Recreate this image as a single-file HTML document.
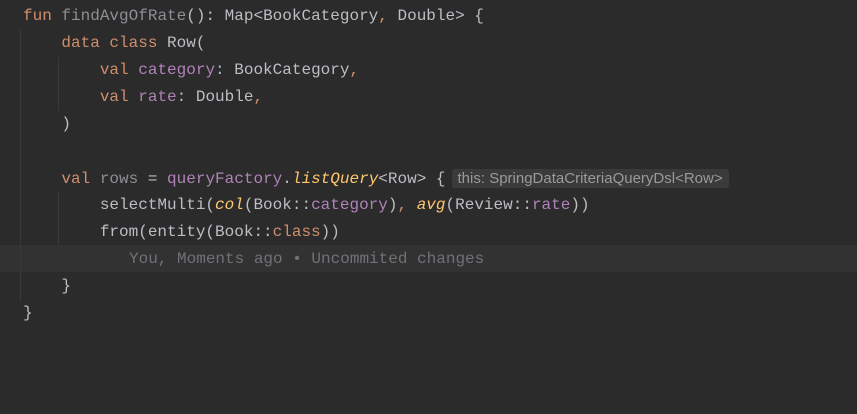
<!DOCTYPE html>
<html><head><style>
body{margin:0;width:857px;height:414px;background:#2b2b2b;overflow:hidden;position:relative;font-family:"Liberation Mono",monospace;font-size:16px;color:#bcbec4}
.l{position:absolute;left:23px;height:27px;line-height:27px;white-space:pre}
.k{color:#cf8e6d}.p{color:#b083b8}.g{color:#8c8f94}.f{color:#ffc66d;font-style:italic}
.hl{position:absolute;left:0;top:245px;width:857px;height:27px;background:#323232}
.vg{position:absolute;width:1px;background:#393939}
.hint{font-family:"Liberation Sans",sans-serif;font-size:15px;color:#9a9a9a;background:#3a3a3a;border-radius:3px;padding:1px 6px;margin-left:6px}
</style></head><body>
<div class="hl"></div>
<div class="vg" style="left:20px;top:30px;height:272px"></div>
<div class="vg" style="left:58px;top:57px;height:54px"></div>
<div class="vg" style="left:58px;top:192px;height:54px"></div>
<div class="l" style="top:3px"><span class="k">fun</span> <span class="g">findAvgOfRate</span>(): Map&lt;BookCategory<span class="k">,</span> Double&gt; {</div>
<div class="l" style="top:30px">    <span class="k">data class</span> Row(</div>
<div class="l" style="top:57px">        <span class="k">val</span> <span class="p">category</span>: BookCategory<span class="k">,</span></div>
<div class="l" style="top:84px">        <span class="k">val</span> <span class="p">rate</span>: Double<span class="k">,</span></div>
<div class="l" style="top:111px">    )</div>
<div class="l" style="top:165px">    <span class="k">val</span> <span class="g">rows</span> = <span class="p">queryFactory</span>.<span class="f">listQuery</span>&lt;Row&gt; {<span class="hint">this: SpringDataCriteriaQueryDsl&lt;Row&gt;</span></div>
<div class="l" style="top:192px">        selectMulti(<span class="f">col</span>(Book::<span class="p">category</span>)<span class="k">,</span> <span class="f">avg</span>(Review::<span class="p">rate</span>))</div>
<div class="l" style="top:219px">        from(entity(Book::<span class="k">class</span>))</div>
<div class="l" style="top:246px;left:129px;color:#6f7277">You, Moments ago • Uncommited changes</div>
<div class="l" style="top:273px">    }</div>
<div class="l" style="top:300px">}</div>
</body></html>
